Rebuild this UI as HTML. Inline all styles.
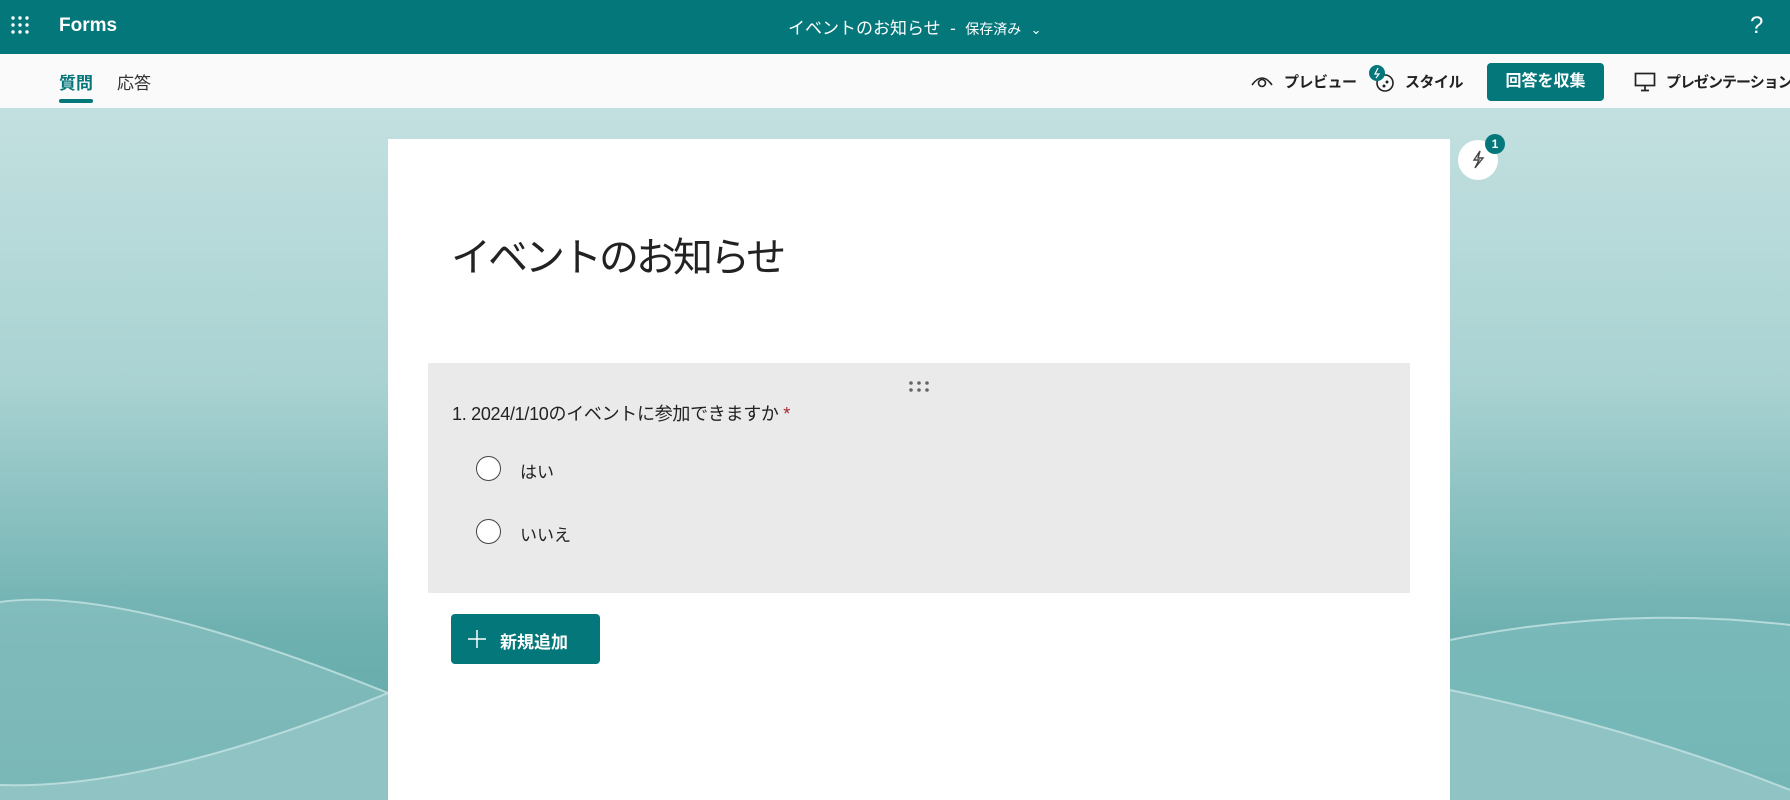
<!DOCTYPE html>
<html><head><meta charset="utf-8"><style>
*{margin:0;padding:0;box-sizing:border-box}
body{width:1790px;height:800px;overflow:hidden;font-family:"Liberation Sans","Noto Sans CJK JP",sans-serif;position:relative;background:#fff}
.hdr{position:absolute;left:0;top:0;width:1790px;height:54px;background:#04777b;color:#fff}
.sub{position:absolute;left:0;top:54px;width:1790px;height:54px;background:#fafafa}
.bg{position:absolute;left:0;top:108px;width:1790px;height:692px;background:linear-gradient(#c3e0e0,#a9d2d2 40%,#6fb1b1 75%,#5ea7a7)}
.abs{position:absolute}
.card{position:absolute;left:388px;top:139px;width:1062px;height:661px;background:#fff}
.q{position:absolute;left:428px;top:363px;width:982px;height:230px;background:#eaeaea}
.radio{position:absolute;width:25px;height:25px;border:1.5px solid #444;border-radius:50%;background:#fff}
.nav{font-size:15px;font-weight:bold;color:#222;letter-spacing:-0.5px;white-space:nowrap;top:17px}
</style></head><body>
<div class="hdr">
 <svg class="abs" style="left:10px;top:15px" width="22" height="22" viewBox="0 0 22 22" fill="#fff">
  <circle cx="3" cy="3" r="1.7"/><circle cx="10" cy="3" r="1.7"/><circle cx="17" cy="3" r="1.7"/>
  <circle cx="3" cy="10" r="1.7"/><circle cx="10" cy="10" r="1.7"/><circle cx="17" cy="10" r="1.7"/>
  <circle cx="3" cy="17" r="1.7"/><circle cx="10" cy="17" r="1.7"/><circle cx="17" cy="17" r="1.7"/></svg>
 <div class="abs" style="left:59px;top:15px;font-size:19px;font-weight:bold">Forms</div>
 <div class="abs" style="left:788px;top:14px;font-size:17px">イベントのお知らせ &nbsp;- &nbsp;<span style="font-size:14px">保存済み</span> &nbsp;<span style="font-size:13px">&#8964;</span></div>
 <div class="abs" style="left:1750px;top:12px;font-size:24px;font-weight:300">?</div>
</div>
<div class="sub">
 <div class="abs" style="left:59px;top:15px;font-size:17px;color:#04777b;font-weight:bold">質問</div>
 <div class="abs" style="left:59px;top:45px;width:34px;height:4px;border-radius:2px;background:#04777b"></div>
 <div class="abs" style="left:117px;top:15px;font-size:17px;color:#333">応答</div>
 <svg class="abs" style="left:1251px;top:19px" width="22" height="16" viewBox="0 0 22 16" fill="none" stroke="#222" stroke-width="1.6"><path d="M1 12 Q11 -2 21 12"/><circle cx="11" cy="10" r="3.5"/></svg>
 <div class="abs nav" style="left:1284px">プレビュー</div>
 <svg class="abs" style="left:1368px;top:10px" width="28" height="30" viewBox="0 0 28 30"><circle cx="17" cy="19" r="8" fill="none" stroke="#222" stroke-width="1.6"/><circle cx="19" cy="18" r="1.5" fill="#222"/><circle cx="16" cy="22" r="1.5" fill="#222"/><circle cx="9" cy="9" r="8" fill="#04777b"/><path d="M10 4 L7 10 H11 L8 14" stroke="#fff" fill="none" stroke-width="1.2"/></svg>
 <div class="abs nav" style="left:1405px">スタイル</div>
 <div class="abs" style="left:1487px;top:9px;width:117px;height:38px;background:#04777b;border-radius:4px;color:#fff;font-size:16px;font-weight:bold;text-align:center;line-height:38px">回答を収集</div>
 <svg class="abs" style="left:1634px;top:18px" width="22" height="20" viewBox="0 0 22 20" fill="none" stroke="#222" stroke-width="1.7"><rect x="1.5" y="1.5" width="19" height="12"/><path d="M11 13.5 V18 M7 18.5 H15"/></svg>
 <div class="abs nav" style="left:1666px;letter-spacing:-1px">プレゼンテーション</div>
</div>
<div class="bg"></div>
<svg class="abs" style="left:0;top:108px" width="1790" height="692" viewBox="0 108 1790 692">
 <path d="M0 602 Q120 585 388 693 Q150 790 0 785 Z" fill="#8cc2c2" opacity="0.6"/>
 <path d="M0 785 Q150 790 388 693 L388 800 L0 800Z" fill="#8fc3c4"/>
 <path d="M0 602 Q120 585 388 693" stroke="#c5e3e3" stroke-width="2" fill="none" opacity="0.8"/>
 <path d="M0 785 Q150 790 388 693" stroke="#c5e3e3" stroke-width="2" fill="none" opacity="0.8"/>
 <path d="M1450 640 Q1620 605 1790 625 L1790 800 L1450 800Z" fill="#7dbcbc" opacity="0.7"/>
 <path d="M1450 690 Q1640 730 1790 790 L1790 800 L1450 800Z" fill="#8fc3c4"/>
 <path d="M1450 640 Q1620 605 1790 625" stroke="#c5e3e3" stroke-width="2" fill="none" opacity="0.8"/>
 <path d="M1450 690 Q1640 730 1790 790" stroke="#c5e3e3" stroke-width="2" fill="none" opacity="0.8"/>
</svg>
<div class="card"></div>
<div class="abs" style="left:1458px;top:140px;width:40px;height:40px;border-radius:50%;background:#fff"></div>
<svg class="abs" style="left:1469px;top:149px" width="18" height="22" viewBox="0 0 18 22" fill="none" stroke="#444" stroke-width="1.4"><path d="M11 2 L5 11 H10 L6 19 L14 9 H9 Z"/></svg>
<div class="abs" style="left:1485px;top:134px;width:20px;height:20px;border-radius:50%;background:#04777b;color:#fff;font-size:12px;font-weight:bold;text-align:center;line-height:20px">1</div>
<div class="abs" style="left:451px;top:225px;font-size:40px;color:#222;letter-spacing:-3px">イベントのお知らせ</div>
<div class="q"></div>
<svg class="abs" style="left:908px;top:380px" width="22" height="12" viewBox="0 0 22 12" fill="#666"><circle cx="3" cy="3" r="1.8"/><circle cx="11" cy="3" r="1.8"/><circle cx="19" cy="3" r="1.8"/><circle cx="3" cy="10" r="1.8"/><circle cx="11" cy="10" r="1.8"/><circle cx="19" cy="10" r="1.8"/></svg>
<div class="abs" style="left:452px;top:400px;font-size:18px;color:#222;letter-spacing:-0.3px">1. 2024/1/10のイベントに参加できますか <span style="color:#a4262c">*</span></div>
<div class="radio" style="left:476px;top:456px"></div>
<div class="abs" style="left:520px;top:458px;font-size:17px;color:#222">はい</div>
<div class="radio" style="left:476px;top:519px"></div>
<div class="abs" style="left:520px;top:521px;font-size:17px;color:#222">いいえ</div>
<div class="abs" style="left:451px;top:614px;width:149px;height:50px;background:#04777b;border-radius:4px"></div>
<svg class="abs" style="left:468px;top:630px" width="18" height="18" viewBox="0 0 18 18" stroke="#fff" stroke-width="1.5"><path d="M9 0 V18 M0 9 H18"/></svg>
<div class="abs" style="left:500px;top:628px;font-size:17px;font-weight:bold;color:#fff">新規追加</div>
</body></html>
